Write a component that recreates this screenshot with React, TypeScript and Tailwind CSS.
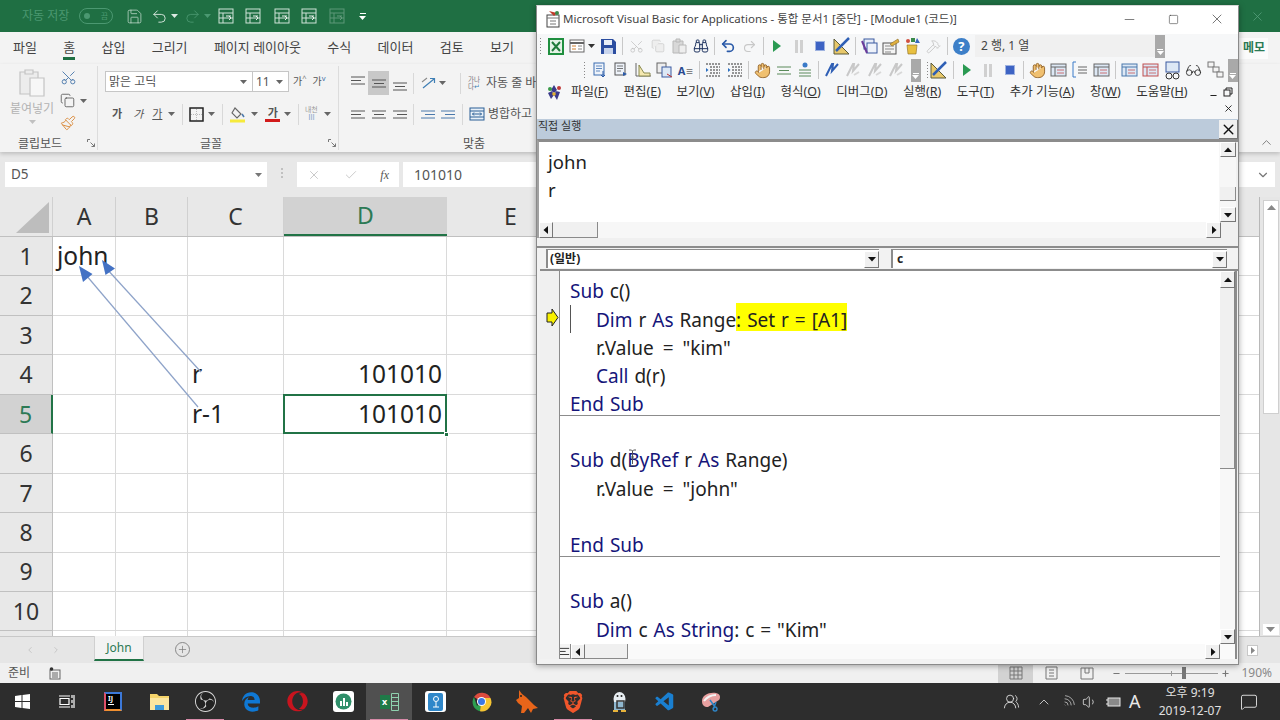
import React from "react";
import { Scissors, Copy, Paintbrush, Undo2, Redo2, Save, ChevronDown, ChevronUp, Binoculars, Hammer, Hand, Plus, Check, X, Minus, Square, MessageSquare, Wifi, Volume1, ChevronLeft, ChevronRight, UsersRound, Glasses } from "lucide-react";
import { FaEdgeLegacy, FaOpera } from "react-icons/fa6";
import { SiObsstudio, SiBrave } from "react-icons/si";
import { VscVscode } from "react-icons/vsc";

type P = { children?: React.ReactNode };

const Dd = ({ c = "#666" }: { c?: string }) => (
  <svg width="7" height="4" viewBox="0 0 7 4"><path d="M0 0h7L3.500 4z" fill={c} /></svg>
);

const Lines = ({ a, v = "mid", c = "#555" }: { a: "l" | "c" | "r"; v?: "top" | "mid" | "bot"; c?: string }) => {
  const y0 = v === "top" ? 2 : v === "mid" ? 5 : 8;
  const ws = a === "l" ? [[1, 15], [1, 11], [1, 15]] : a === "c" ? [[1, 15], [3, 13], [1, 15]] : [[1, 15], [5, 15], [1, 15]];
  return (
    <svg width="16" height="16" viewBox="0 0 16 16">
      {ws.map((w, i) => <path key={i} d={`M${w[0]} ${y0 + i * 3.5}H${w[1]}`} stroke={c} strokeWidth="1" />)}
    </svg>
  );
};

/* ---------- Excel title bar ---------- */
const QatDoc = ({ op = 1 }: { op?: number }) => (
  <svg width="18" height="18" viewBox="0 0 18 18" fill="none" stroke="#cfe3d8" strokeWidth="1" opacity={op}>
    <rect x="2" y="2" width="14" height="14" />
    <path d="M2 6h14M2 11h14M6 6v10" />
    <path d="M9 9h5M12 13l2-2-2-2" stroke="#e6f0ea" />
  </svg>
);

const TitleBar = () => (
  <div className="h-[32px] bg-[#1f6f43] flex items-center pl-[22px] shrink-0">
    <span className="text-[12px] text-[#4b9871] w-[48px] whitespace-nowrap">자동 저장</span>
    <div className="ml-[9px] w-[34px] h-[16px] rounded-full border border-[#4b9871] flex items-center justify-between px-[4px]">
      <div className="w-[6px] h-[6px] rounded-full bg-[#4b9871]" />
      <span className="text-[8px] text-[#4b9871] leading-none">끔</span>
    </div>
    <Save size={17} strokeWidth={1} className="ml-[13px] text-[#cfe3d8]" />
    <Undo2 size={17} strokeWidth={1.3} className="ml-[8px] text-[#dce9e2]" />
    <div className="ml-[3px]"><Dd c="#dce9e2" /></div>
    <Redo2 size={17} strokeWidth={1.2} className="ml-[6px] text-[#4b9871]" />
    <div className="ml-[3px]"><Dd c="#4b9871" /></div>
    <div className="ml-[6px]"><QatDoc /></div>
    <div className="ml-[9px]"><QatDoc /></div>
    <div className="ml-[11px]"><QatDoc /></div>
    <div className="ml-[9px]"><QatDoc /></div>
    <div className="ml-[10px]"><QatDoc op={0.35} /></div>
    <div className="ml-[13px] flex flex-col items-center gap-[2px]">
      <div className="w-[6px] h-[1px] bg-white" />
      <Dd c="#ffffff" />
    </div>
    <X size={15} strokeWidth={1.2} className="ml-auto mr-[15px] text-[#5aa27f]" />
  </div>
);

/* ---------- Tabs ---------- */
const tabs = ["파일", "홈", "삽입", "그리기", "페이지 레이아웃", "수식", "데이터", "검토", "보기"];
const TabRow = () => (
  <div className="h-[32px] bg-[#f3f3f3] flex items-center pl-[13px] gap-[26.300px] shrink-0 relative">
    {tabs.map((t) => (
      <div key={t} className="relative text-[13px] text-[#444] whitespace-nowrap">
        {t}
        {t === "홈" && <div className="absolute left-0 right-0 top-[19px] h-[3px] bg-[#1f6f43]" />}
      </div>
    ))}
    <div className="ml-auto mr-[12px] w-[31px] h-[21px] bg-[#fbfbfb] text-[12px] font-bold text-[#2c7a55] flex items-center justify-end pr-[3px] whitespace-nowrap">메모</div>
  </div>
);

/* ---------- Ribbon ---------- */
const Launcher = () => (
  <svg width="8" height="8" viewBox="0 0 8 8" className="absolute right-[2px] bottom-[3px]" fill="none" stroke="#777" strokeWidth="1">
    <path d="M.5 3V.5H3M7.500 7.500L3.500 3.500M7.500 4.500v3h-3" />
  </svg>
);
const Vs = () => <div className="w-[1px] h-[21px] bg-[#d8d8d8] shrink-0" />;

const Ribbon = () => (
  <div className="h-[88px] bg-[#f3f3f3] flex shrink-0 relative z-10 shadow-[0_2px_4px_rgba(0,0,0,0.18)]">
    {/* Clipboard */}
    <div className="w-[98px] relative flex flex-col border-r border-[#dcdcdc] my-[2px] shrink-0">
      <div className="flex flex-1 pt-[2px]">
        <div className="w-[60px] flex flex-col items-center pl-[4px]">
          <svg width="28" height="30" viewBox="0 0 28 30" fill="none" stroke="#c4c4c4" strokeWidth="1.200">
            <path d="M2 4h18v22H2z" fill="#ececec" />
            <path d="M7 2h8v4H7z" fill="#ececec" />
            <path d="M12 10h14v18H12z" fill="#f7f7f7" />
          </svg>
          <span className="text-[12px] text-[#b2b2b2] leading-[14px] mt-[4px] whitespace-nowrap">붙여넣기</span>
          <div className="mt-[4px]"><Dd c="#c0c0c0" /></div>
        </div>
        <div className="flex flex-col items-start pl-[0px] pt-[1px]">
          <Scissors size={17} strokeWidth={1.300} className="text-[#4a78ab] ml-[0px] rotate-[-90deg]" />
          <div className="flex items-center gap-[5px] mt-[7px]">
            <Copy size={15} strokeWidth={1.200} className="text-[#444]" />
            <Dd c="#666" />
          </div>
          <Paintbrush size={16} strokeWidth={1.400} className="text-[#d98b3c] mt-[7px]" />
        </div>
      </div>
      <div className="absolute bottom-[-2px] left-[18px] h-[16px] text-[12px] leading-[16px] text-[#555] whitespace-nowrap">클립보드</div>
      <Launcher />
    </div>
    {/* Font */}
    <div className="w-[241px] relative flex flex-col border-r border-[#dcdcdc] my-[2px] shrink-0 pl-[7px]">
      <div className="flex items-center pt-[5px]">
        <div className="w-[148px] h-[21px] bg-white border border-[#c6c6c6] flex items-center justify-between pl-[3px] pr-[5px] text-[12px] text-[#555]">
          맑은 고딕<Dd />
        </div>
        <div className="w-[36px] h-[21px] bg-white border border-l-0 border-[#c6c6c6] flex items-center justify-between pl-[3px] pr-[5px] text-[12px] text-[#555]">
          11<Dd />
        </div>
        <span className="ml-[4px] text-[10px] text-[#555]">가<sup className="text-[#777]">^</sup></span>
        <span className="ml-[6px] text-[10px] text-[#555]">가<sup className="text-[#4a78ab]">v</sup></span>
      </div>
      <div className="flex items-center mt-[10px] text-[11px] text-[#555] h-[24px]">
        <span className="ml-[7px] font-bold">가</span>
        <span className="ml-[11px] italic">가</span>
        <span className="ml-[9px] underline">가</span>
        <div className="ml-[6px]"><Dd /></div>
        <div className="ml-[7px]"><Vs /></div>
        <svg width="15" height="15" viewBox="0 0 15 15" className="ml-[6px]" fill="none">
          <rect x="1" y="1" width="13" height="13" stroke="#222" strokeWidth="1.500" />
          <path d="M7.500 2v11M2 7.500h11" stroke="#bbb" strokeDasharray="1 1" />
        </svg>
        <div className="ml-[4px]"><Dd /></div>
        <div className="ml-[7px]"><Vs /></div>
        <svg width="18" height="18" viewBox="0 0 18 18" className="ml-[6px]" fill="none">
          <path d="M6 3l6 6-4 4-5-5z" stroke="#666" strokeWidth="1.100" />
          <path d="M13 9l2 3" stroke="#4a78ab" strokeWidth="1.500" />
          <rect x="1" y="14.500" width="15" height="3" fill="#f6ea3b" />
        </svg>
        <div className="ml-[4px]"><Dd /></div>
        <div className="ml-[7px] w-[15px] flex flex-col items-center leading-none">
          <span className="text-[11px] font-bold text-[#555] leading-[13px]">가</span>
          <div className="w-[15px] h-[3px] bg-[#d21a1a]" />
        </div>
        <div className="ml-[4px]"><Dd /></div>
        <div className="ml-[7px]"><Vs /></div>
        <div className="ml-[4px] w-[16px] text-[7px] text-[#999] leading-[8px] text-center">내천<div className="text-[#7aa0c8]">Ⅲ</div></div>
        <div className="ml-[5px]"><Dd /></div>
      </div>
      <div className="absolute bottom-[-2px] left-[102px] h-[16px] text-[12px] leading-[16px] text-[#555]">글꼴</div>
      <Launcher />
    </div>
    {/* Alignment */}
    <div className="flex-1 relative flex flex-col pl-[8px] my-[2px]">
      <div className="flex items-center h-[24px] mt-[5px]">
        <div className="w-[21px] h-[24px] flex items-center justify-center"><Lines a="l" v="top" /></div>
        <div className="w-[21px] h-[24px] flex items-center justify-center bg-[#c8c8c8]"><Lines a="c" v="mid" /></div>
        <div className="w-[21px] h-[24px] flex items-center justify-center"><Lines a="c" v="bot" /></div>
        <div className="ml-[3px]"><Vs /></div>
        <svg width="17" height="16" viewBox="0 0 17 16" className="ml-[6px]" fill="none">
          <path d="M3 13L14 4M10 3.500h4.500V8" stroke="#3f7fb5" strokeWidth="1.200" />
          <path d="M2 7l5-4" stroke="#888" strokeWidth="1.100" />
        </svg>
        <div className="ml-[2px]"><Dd /></div>
        <div className="ml-[14px]"><Vs /></div>
        <div className="ml-[6px] w-[14px] text-[6.500px] leading-[7px] text-[#777] text-center">가나<br />다<span className="text-[#3f7fb5]">↵</span></div>
        <span className="ml-[5px] text-[12px] text-[#555] whitespace-nowrap">자동 줄 바꿈</span>
      </div>
      <div className="flex items-center h-[24px] mt-[7px]">
        <div className="w-[21px] flex justify-center"><Lines a="l" /></div>
        <div className="w-[21px] flex justify-center"><Lines a="c" /></div>
        <div className="w-[21px] flex justify-center"><Lines a="r" /></div>
        <div className="ml-[3px]"><Vs /></div>
        <div className="ml-[6px]"><Lines a="r" c="#4a78ab" /></div>
        <div className="ml-[4px]"><Lines a="r" c="#4a78ab" /></div>
        <div className="ml-[6px]"><Vs /></div>
        <svg width="16" height="16" viewBox="0 0 16 16" className="ml-[6px]" fill="none" stroke="#2a5f96">
          <rect x="1" y="2" width="14" height="12" fill="#e8f0f8" />
          <path d="M1 5h14M1 11h14M3.500 8h9M5 6.500L3.500 8 5 9.500M11 6.500L12.500 8 11 9.500" />
        </svg>
        <span className="ml-[3px] text-[12px] text-[#555] whitespace-nowrap">병합하고</span>
      </div>
      <div className="absolute bottom-[-2px] left-[124px] h-[16px] text-[12px] leading-[16px] text-[#555]">맞춤</div>
      <ChevronUp size={15} strokeWidth={1.500} className="absolute right-[6px] bottom-[0px] text-[#777]" />
    </div>
  </div>
);

/* ---------- Formula bar ---------- */
const FormulaBar = () => (
  <div className="h-[45px] bg-[#e8e8e8] flex items-start pt-[10px] pl-[5px] pr-[5px] shrink-0">
    <div className="w-[262px] h-[25px] bg-white flex items-center justify-between pl-[6px] pr-[5px] text-[13.500px] text-[#555] leading-none">
      D5<Dd c="#777" />
    </div>
    <div className="ml-[14px] mt-[6px] w-[2px] flex flex-col gap-[2px]">
      <div className="h-[2px] bg-[#c0c0c0]" /><div className="h-[2px] bg-[#c0c0c0]" /><div className="h-[2px] bg-[#c0c0c0]" />
    </div>
    <div className="ml-[14px] w-[102px] h-[25px] bg-white flex items-center justify-between px-[10px]">
      <X size={14} strokeWidth={1.500} className="text-[#c2c2c2]" />
      <Check size={14} strokeWidth={1.500} className="text-[#c2c2c2]" />
      <span className="text-[12px] italic font-['Liberation_Serif',serif] text-[#555]">fx</span>
    </div>
    <div className="ml-[4px] flex-1 h-[25px] bg-white flex items-center justify-between pl-[11px] pr-[4px] text-[14px] text-[#555] leading-none">
      101010<ChevronDown size={14} strokeWidth={2} className="text-[#777] mr-[1px]" />
    </div>
  </div>
);

/* ---------- Sheet ---------- */
const colW = ["w-[63px]", "w-[72px]", "w-[96px]", "w-[163px]", "w-[128px]", "w-[685px]"];
const colN = ["A", "B", "C", "D", "E", ""];
const data: Record<number, Record<number, string>> = {
  1: { 0: "john" },
  4: { 2: "r", 3: "101010" },
  5: { 2: "r-1", 3: "101010" },
};

const Sheet = () => (
  <div className="flex-1 flex min-h-0">
    <div className="w-[1260px] relative overflow-hidden bg-white border-r border-[#b8b8b8]">
      <div className="h-[40px] flex bg-[#e8e8e8] border-b border-[#c0c0c0]">
        <div className="w-[53px] shrink-0 flex items-end justify-end pr-[3px] pb-[3px] border-r border-[#d0d0d0]">
          <svg width="33" height="31" viewBox="0 0 33 31"><path d="M33 0v31H0z" fill="#bdbdbd" /></svg>
        </div>
        {colN.map((n, i) => (
          <div key={i} className={`${colW[i]} shrink-0 flex items-center justify-center text-[23px] ${i === 3 ? "bg-[#d2d2d2] text-[#2c7a55] border-b-2 border-[#217346]" : "text-[#333] border-r border-[#d0d0d0]"}`}>{n}</div>
        ))}
      </div>
      {Array.from({ length: 11 }, (_, r) => r + 1).map((r) => (
        <div key={r} className="h-[39.450px] flex">
          <div className={`w-[53px] shrink-0 flex items-center justify-center text-[23px] border-b border-[#c0c0c0] ${r === 5 ? "bg-[#d2d2d2] text-[#2c7a55] border-r-2 border-r-[#217346]" : "bg-[#e8e8e8] text-[#333] border-r border-r-[#c0c0c0]"}`}>{r <= 10 ? r : ""}</div>
          {colN.map((_, c) => {
            const v = data[r]?.[c];
            return (
              <div key={c} className={`${colW[c]} shrink-0 flex items-center border-b border-r border-[#dadada] text-[24.500px] text-[#222] whitespace-nowrap ${c === 3 ? "justify-end pr-[4px]" : "pl-[4px]"}`}>{v}</div>
            );
          })}
        </div>
      ))}
      {/* selection */}
      <div className="absolute left-[283px] top-[197px] w-[164px] h-[40px] border-2 border-[#217346]" />
      <div className="absolute left-[444px] top-[235px] w-[5px] h-[5px] bg-[#217346] border border-white" />
      {/* tracer arrows */}
      <svg className="absolute left-0 top-0" width="300" height="240" viewBox="0 0 300 240">
        <g transform="translate(0,-197)">
          <path d="M201 372L106 268" stroke="#8ea3c9" strokeWidth="1.200" fill="none" />
          <path d="M198 407L86 275" stroke="#8ea3c9" strokeWidth="1.200" fill="none" />
          <path d="M102 260L115 268.500 105.500 275z" fill="#4472c4" />
          <path d="M79 266L92.500 274 83 282z" fill="#4472c4" />
        </g>
      </svg>
    </div>
    <div className="w-[19px] bg-[#e6e6e6] pl-[3px] pt-[3px] flex flex-col pb-[1px]">
      <div className="h-[214px] bg-white border border-[#cfcfcf] pt-[4px] pl-[3px]"><svg width="9" height="5" viewBox="0 0 9 5"><path d="M4.500 0L9 5H0z" fill="#888" /></svg></div>
      <div className="flex-1" />
      <div className="h-[11px] bg-white pl-[3px] pt-[3px]"><svg width="9" height="5" viewBox="0 0 9 5"><path d="M0 0h9L4.500 5z" fill="#888" /></svg></div>
    </div>
  </div>
);

const SheetTabs = () => (
  <div className="h-[27px] bg-[#e6e6e6] flex shrink-0 border-t border-[#c8c8c8]">
    <div className="w-[94px] flex items-center pl-[25px] gap-[16px] shrink-0">
      <ChevronLeft size={10} className="text-[#c0c0c0]" />
      <ChevronRight size={10} className="text-[#c0c0c0]" />
    </div>
    <div className="w-[50px] h-[25px] mt-[-1px] bg-[#f3f3f3] border-b-2 border-[#217346] border-x border-x-[#d0d0d0] flex items-center justify-center text-[12px] text-[#2c7a55] shrink-0">John</div>
    <div className="ml-[31px] mt-[5px] w-[15px] h-[15px] rounded-full border border-[#888] flex items-center justify-center shrink-0">
      <Plus size={11} strokeWidth={1.500} className="text-[#777]" />
    </div>
    <div className="ml-auto mr-[22px] mt-[8px] w-[11px] h-[11px] bg-white border border-[#c8c8c8] flex items-center justify-center shrink-0">
      <svg width="4" height="7" viewBox="0 0 4 7"><path d="M0 0l4 3.500L0 7z" fill="#888" /></svg>
    </div>
  </div>
);

const StatusBar = () => (
  <div className="h-[20px] bg-[#f0f0f0] flex items-center shrink-0 text-[#555]">
    <span className="ml-[8px] text-[12px]">준비</span>
    <svg width="12" height="13" viewBox="0 0 12 13" className="ml-[19px]" fill="none">
      <rect x="1" y="3" width="10" height="9" stroke="#666" />
      <path d="M3 6h6M3 8h6M3 10h6" stroke="#666" />
      <circle cx="2.500" cy="2" r="1.800" fill="#333" />
    </svg>
    <div className="ml-auto w-[35px] h-[20px] bg-[#d2d2d2] flex items-center justify-center">
      <svg width="14" height="14" viewBox="0 0 14 14" fill="none" stroke="#777"><path d="M1 1h12v12H1zM1 5h12M1 9h12M5 1v12M9 1v12" /></svg>
    </div>
    <div className="w-[36px] flex justify-center">
      <svg width="13" height="14" viewBox="0 0 13 14" fill="none" stroke="#777"><path d="M1 1h11v12H1zM4 4h5M4 7h5M4 10h5" /></svg>
    </div>
    <div className="w-[36px] flex justify-center">
      <svg width="14" height="13" viewBox="0 0 14 13" fill="none" stroke="#777"><path d="M1 1h12v11H1zM5 1v5h4V1" /></svg>
    </div>
    <Minus size={9} strokeWidth={3} className="ml-[7px] text-[#777]" />
    <div className="relative ml-[4px] w-[93px] h-[1px] bg-[#999]">
      <div className="absolute left-[46px] top-[-2px] w-[1px] h-[5px] bg-[#999]" />
      <div className="absolute left-[57px] top-[-6px] w-[4px] h-[12px] bg-[#777]" />
    </div>
    <Plus size={9} strokeWidth={3} className="ml-[3px] text-[#777]" />
    <span className="ml-[11px] mr-[8px] text-[12px] text-[#888]">190%</span>
  </div>
);

/* ---------- Taskbar ---------- */
const Cell = ({ children, active, run }: P & { active?: boolean; run?: boolean }) => (
  <div className={`relative w-[46px] h-[37px] flex items-center justify-center shrink-0 ${active ? "bg-[#505050]" : ""}`}>
    {children}
    {run && <div className="absolute bottom-0 left-[4px] right-[4px] h-[1px] bg-[#d78aa8]" />}
  </div>
);

const Taskbar = () => (
  <div className="h-[37px] bg-[#2d2d2d] flex items-center shrink-0">
    <div className="w-[44px] flex justify-center">
      <svg width="15" height="15" viewBox="0 0 15 15" fill="#fff"><path d="M0 2l6.500-1v6H0zM7.500 1L15 0v7H7.500zM0 8h6.500v6L0 13zM7.500 8H15v7l-7.500-1z" /></svg>
    </div>
    <Cell>
      <svg width="16" height="15" viewBox="0 0 16 15" fill="none" stroke="#fff" strokeWidth="1.200">
        <path d="M0 2h11M0 13h11M1 4.500h9v6H1zM13 1v3M13 6v3M13 11v3M15 1v13" />
      </svg>
    </Cell>
    <Cell>
      <div className="w-[18px] h-[19px] bg-black border-2 border-[#3c78d8] border-l-[#e0506a] border-b-[#f09030] text-[7px] leading-[9px] text-white font-bold pl-[2px]">IJ<div className="w-[6px] h-[1px] bg-white mt-[1px]" /></div>
    </Cell>
    <Cell>
      <svg width="21" height="19" viewBox="0 0 21 19">
        <path d="M1 2h7l2 2h10v14H1z" fill="#f5d46a" />
        <path d="M1 6h19v12H1z" fill="#fbe6a0" />
        <path d="M6 13h9v5H6z" fill="#3e9bdc" />
      </svg>
    </Cell>
    <Cell run><div className="bg-[#222] rounded-full"><SiObsstudio size={21} className="text-[#d8d8d8]" /></div></Cell>
    <Cell><FaEdgeLegacy size={20} className="text-[#0f78d4]" /></Cell>
    <Cell><FaOpera size={21} className="text-[#c8141e]" /></Cell>
    <Cell>
      <div className="w-[21px] h-[21px] rounded-[3px] bg-white flex items-center justify-center">
        <svg width="17" height="17" viewBox="0 0 17 17"><circle cx="8.500" cy="8.500" r="8" fill="#2f8f6a" /><path d="M5 8h2v5H5zM8 5h2v8H8zM11 9h2v4h-2z" fill="#fff" /></svg>
      </div>
    </Cell>
    <Cell active run>
      <div className="flex items-center gap-[1px]">
        <div className="w-[10px] h-[14px] bg-[#1f7a48] text-[9px] font-bold text-white leading-[14px] text-center">x</div>
        <svg width="8" height="18" viewBox="0 0 8 18" fill="none" stroke="#8fd0ae"><path d="M.5.5h7v17h-7zM.5 4.500h7M.5 8.500h7M.5 12.500h7" /></svg>
      </div>
    </Cell>
    <Cell>
      <div className="w-[21px] h-[21px] rounded-[3px] bg-white flex items-center justify-center">
        <div className="w-[15px] h-[18px] rounded-[2px] bg-[#2f87c9] flex items-center justify-center">
          <svg width="9" height="13" viewBox="0 0 9 13" fill="none" stroke="#fff"><circle cx="5" cy="4" r="2.500" /><path d="M2 12h6M5 7v5" /></svg>
        </div>
      </div>
    </Cell>
    <Cell>
      <svg width="21" height="21" viewBox="0 0 21 21">
        <path d="M10.500 10.500L3 6A9.500 9.500 0 0 1 19.500 7H10.500z" fill="#dd4b3e" />
        <path d="M10.500 10.500L6 15 3 6a9.500 9.500 0 0 0 6 14.300z" fill="#2d9f4f" />
        <path d="M10.500 7h9a9.500 9.500 0 0 1-10.500 13.300z" fill="#f6c533" />
        <circle cx="10.500" cy="10.500" r="4.500" fill="#fff" />
        <circle cx="10.500" cy="10.500" r="3.500" fill="#3b78e7" />
      </svg>
    </Cell>
    <Cell>
      <svg width="22" height="24" viewBox="0 0 22 24">
        <path d="M3 0l3 4 4 3 8 8 4 3-5 1-2 4-3-5-4 5H5l1-7-4-3-2-3 3-2z" fill="#e8651a" />
        <circle cx="5" cy="6" r="1" fill="#222" />
      </svg>
    </Cell>
    <Cell run><SiBrave size={22} className="text-[#f1562b]" /></Cell>
    <Cell>
      <svg width="19" height="22" viewBox="0 0 19 22">
        <ellipse cx="9.500" cy="8" rx="6" ry="7" fill="#e8eef2" />
        <path d="M4 11h11v8H4z" fill="#8fb7cf" />
        <rect x="7" y="10" width="7" height="7" fill="none" stroke="#333" strokeWidth="1.500" />
        <path d="M3 20h5M11 20h5" stroke="#e8b33a" strokeWidth="2" />
        <circle cx="7.500" cy="5" r="1" fill="#222" /><circle cx="11.500" cy="5" r="1" fill="#222" />
      </svg>
    </Cell>
    <Cell><VscVscode size={22} className="text-[#1a7fd0]" /></Cell>
    <Cell>
      <svg width="24" height="22" viewBox="0 0 24 22">
        <path d="M3 10C3 4 10 1 17 2c4 1 5 4 3 7L9 16C5 16 3 14 3 10z" fill="#e8a0a0" />
        <path d="M5 10c3-4 7-6 12-6" stroke="#f4f4f4" strokeWidth="2" fill="none" />
        <path d="M11 9l5 7M16 16a2 2 0 1 0 .1 0zM14 19l3-8" stroke="#2f87c9" strokeWidth="1.500" fill="none" />
      </svg>
    </Cell>
    <div className="ml-auto flex items-center text-[#e8e8e8]">
      <UsersRound size={17} strokeWidth={1.200} />
      <ChevronUp size={16} strokeWidth={1.200} className="ml-[16px]" />
      <Wifi size={15} strokeWidth={1.300} className="ml-[9px] text-[#bbbbbb] rotate-45" />
      <Volume1 size={16} strokeWidth={1.200} className="ml-[6px]" />
      <svg width="15" height="10" viewBox="0 0 15 10" className="ml-[8px]" fill="none" stroke="#e8e8e8"><rect x="2" y="1" width="12" height="8" fill="#8a8a8a" /><path d="M0 3h2M0 7h2" /></svg>
      <span className="ml-[8px] text-[18px] w-[14px]">A</span>
      <div className="ml-[10px] w-[74px] flex flex-col items-center text-[12px] leading-[18px] text-[#e0e0e0]">
        <span>오후 9:19</span><span>2019-12-07</span>
      </div>
      <MessageSquare size={18} strokeWidth={1.200} className="ml-[13px] mr-[22px]" />
    </div>
  </div>
);

/* ---------- VBA window ---------- */
const T = ({ children }: P) => <div className="w-[21.500px] h-[22px] flex items-center justify-center shrink-0">{children}</div>;
const Sep = () => <div className="w-[1px] h-[18px] mx-[2.500px] bg-[#c8c8c8] shrink-0" />;
const Grip = () => (
  <div className="w-[2px] flex flex-col gap-[2px] shrink-0">
    {[0, 1, 2, 3, 4, 5].map((i) => <div key={i} className="w-[1px] h-[1px] bg-[#888]" />)}
  </div>
);
const GrayGrip = () => (
  <div className="w-[10px] h-[23px] bg-[#a9a9a9] flex flex-col items-center justify-end pb-[3px] gap-[1px] shrink-0">
    <div className="w-[6px] h-[1px] bg-white" />
    <Dd c="#fff" />
  </div>
);

const Doc = ({ c = "#3b6db0", extra }: { c?: string; extra?: React.ReactNode }) => (
  <svg width="16" height="16" viewBox="0 0 16 16" fill="none">
    <rect x="2" y="1" width="10" height="12" fill="#eef3fa" stroke={c} />
    <path d="M4 4h6M4 6.500h6M4 9h4" stroke={c} strokeWidth=".8" />
    {extra}
  </svg>
);
const Indent = ({ c = "#333" }: { c?: string }) => (
  <svg width="16" height="16" viewBox="0 0 16 16" fill="none" stroke={c}>
    <path d="M1 2h14M5 5h10M5 8h10M5 11h10M1 14h14" strokeDasharray="2 1" />
    <path d="M1 6l2.500 2L1 10z" fill="#2a6fc0" stroke="none" />
  </svg>
);
const Design = () => (
  <svg width="20" height="20" viewBox="0 0 20 20" fill="none">
    <path d="M2 3v15h15z" fill="#e8c86a" stroke="#5a5a3a" />
    <path d="M4 15L17 2" stroke="#2f5fb5" strokeWidth="2.500" />
  </svg>
);
const Run = () => <svg width="10" height="14" viewBox="0 0 10 14"><path d="M1 1l8 6-8 6z" fill="#2a9a52" /></svg>;
const Pause = () => <svg width="10" height="13" viewBox="0 0 10 13" fill="#d0d0d0"><rect x="1" y="0" width="3" height="13" /><rect x="6" y="0" width="3" height="13" /></svg>;
const Stop = () => <div className="w-[10px] h-[10px] bg-[#3d63c4] border border-[#9fb3e0]" />;
const HandI = () => <Hand size={17} strokeWidth={1.200} className="text-[#8a5a20] fill-[#f0c070]" />;
const Wand = ({ faded }: { faded?: boolean }) => (
  <svg width="18" height="18" viewBox="0 0 18 18" fill="none">
    <path d="M2 15L8 3h1l-1 7 6-7" stroke={faded ? "#c8c8c8" : "#2f5fb5"} strokeWidth="2" />
    {faded && <path d="M9 14l5-3" stroke="#d8d8d8" strokeWidth="2" />}
  </svg>
);
const Sq = ({ c = "#4a78ab" }: { c?: string }) => (
  <svg width="17" height="16" viewBox="0 0 17 16" fill="none"><rect x="1" y="2" width="15" height="12" fill="#dde8f5" stroke={c} /><path d="M1 5h15M5 5v9" stroke={c} /><path d="M7 8h7M7 11h7" stroke="#c85050" strokeWidth=".8" /></svg>
);

const menu: [string, string][] = [["파일", "F"], ["편집", "E"], ["보기", "V"], ["삽입", "I"], ["형식", "O"], ["디버그", "D"], ["실행", "R"], ["도구", "T"], ["추가 기능", "A"], ["창", "W"], ["도움말", "H"]];

const Arrow = ({ d }: { d: "u" | "d" | "l" | "r" }) => (
  <svg width="8" height="8" viewBox="0 0 8 8">
    <path fill="#111" d={d === "u" ? "M4 1.500L8 6H0z" : d === "d" ? "M0 2h8L4 6.500z" : d === "l" ? "M6 0v8L1.500 4z" : "M2 0v8l4.500-4z"} />
  </svg>
);
const SBtn = ({ d, cls = "w-[15px] h-[15px]" }: { d: "u" | "d" | "l" | "r"; cls?: string }) => (
  <div className={`${cls} bg-[#f0f0f0] border-t border-l border-t-white border-l-white border-r border-b border-r-[#777] border-b-[#777] flex items-center justify-center shrink-0`}>
    <Arrow d={d} />
  </div>
);
const Thumb = ({ cls }: { cls: string }) => (
  <div className={`${cls} bg-[#f0f0f0] border-r border-b border-r-[#8a8a8a] border-b-[#8a8a8a] shrink-0`} />
);

type Seg = [string, "k" | "n"];
const codeLines: { segs: Seg[]; ind?: boolean; sep?: boolean; cur?: boolean; wide?: boolean }[] = [
  { segs: [["Sub", "k"], [" c()", "n"]] },
  { segs: [["Dim", "k"], [" r ", "n"], ["As", "k"], [" Range", "n"]], ind: true, cur: true },
  { segs: [["r.Value = \"kim\"", "n"]], ind: true, wide: true },
  { segs: [["Call", "k"], [" d(r)", "n"]], ind: true },
  { segs: [["End Sub", "k"]], sep: true },
  { segs: [] },
  { segs: [["Sub", "k"], [" d(", "n"], ["ByRef", "k"], [" r ", "n"], ["As", "k"], [" Range)", "n"]] },
  { segs: [["r.Value = \"john\"", "n"]], ind: true, wide: true },
  { segs: [] },
  { segs: [["End Sub", "k"]], sep: true },
  { segs: [] },
  { segs: [["Sub", "k"], [" a()", "n"]] },
  { segs: [["Dim", "k"], [" c ", "n"], ["As String", "k"], [": c = \"Kim\"", "n"]], ind: true },
];

const Vba = () => (
  <div className="absolute z-20 left-[536px] top-[5px] w-[703px] h-[660px] bg-[#f2f2f2] border border-[#8a8a8a] border-t-[#d8d8d8] flex flex-col shadow-[0_1px_6px_rgba(0,0,0,0.35)]">
    {/* title */}
    <div className="h-[28px] bg-white flex items-center pb-[2px] shrink-0">
      <svg width="18" height="18" viewBox="0 0 18 18" className="ml-[7px]" fill="none">
        <rect x="3" y="5" width="12" height="12" fill="#fff" stroke="#444" />
        <path d="M3 8h12M6 11h6M6 14h6" stroke="#777" />
        <path d="M5 1l8 2-3 3z" fill="#c03a2a" /><circle cx="13" cy="3" r="2" fill="#3a8a4a" />
      </svg>
      <span className="ml-[1px] text-[11.500px] text-[#444] whitespace-nowrap">Microsoft Visual Basic for Applications - 통합 문서1 [중단] - [Module1 (코드)]</span>
      <Minus size={15} strokeWidth={1} className="ml-auto text-[#333]" />
      <Square size={11} strokeWidth={1.200} className="ml-[31px] text-[#333]" />
      <X size={16} strokeWidth={1} className="ml-[30px] mr-[13px] text-[#333]" />
    </div>
    {/* toolbar 1 */}
    <div className="h-[24px] flex items-center pl-[3px] bg-[#f6f7f8] shrink-0">
      <Grip />
      <div className="w-[3px]" />
      <T><svg width="16" height="17" viewBox="0 0 16 17" fill="none"><rect x="1" y="1" width="14" height="15" fill="#e4f2e6" stroke="#1f8f3f" strokeWidth="2" /><path d="M4 4l8 9M12 4l-8 9" stroke="#1f7a3a" strokeWidth="2" /></svg></T>
      <T><svg width="16" height="16" viewBox="0 0 16 16" fill="none"><rect x="1" y="2" width="14" height="12" fill="#fff" stroke="#666" /><path d="M1 5h14" stroke="#666" strokeWidth="2" /><path d="M3 8h4M3 11h4" stroke="#d08030" /><path d="M9 8h4M9 11h4" stroke="#888" /></svg></T>
      <div className="w-[10px] shrink-0"><Dd c="#333" /></div>
      <T><svg width="15" height="15" viewBox="0 0 15 15"><path d="M0 0h12l3 3v12H0z" fill="#2b4da0" /><rect x="3" y="1" width="8" height="5" fill="#e8eef8" /><rect x="3" y="9" width="9" height="6" fill="#c8d4ec" /></svg></T>
      <Sep />
      <T><Scissors size={15} strokeWidth={1.200} className="text-[#c0c0c0] rotate-[-90deg]" /></T>
      <T><Copy size={14} strokeWidth={1.200} className="text-[#c8c8c8] fill-[#eeeeee]" /></T>
      <T><svg width="15" height="16" viewBox="0 0 15 16" fill="#d8d8d8" stroke="#b8b8b8"><path d="M1 3h10v12H1z" /><path d="M4 1h4v3H4z" /><path d="M7 7h7v8H7z" fill="#eee" /></svg></T>
      <T><Binoculars size={16} strokeWidth={1.500} className="text-[#1f3460]" /></T>
      <Sep />
      <T><Undo2 size={16} strokeWidth={2.500} className="text-[#2a5aa8]" /></T>
      <T><Redo2 size={15} strokeWidth={1.800} className="text-[#c8c8c8]" /></T>
      <Sep />
      <T><Run /></T>
      <T><Pause /></T>
      <T><Stop /></T>
      <T><Design /></T>
      <Sep />
      <T><svg width="17" height="18" viewBox="0 0 17 18" fill="none"><rect x="3" y="2" width="10" height="10" fill="#e6ecf8" stroke="#3a5aa0" /><rect x="6" y="6" width="10" height="10" fill="#eef2fa" stroke="#3a5aa0" /><path d="M1 4l5 12" stroke="#6a3a9a" strokeWidth="2" /></svg></T>
      <T><svg width="18" height="17" viewBox="0 0 18 17" fill="none"><rect x="1" y="5" width="13" height="11" fill="#f4f4f4" stroke="#555" /><path d="M3 8h9M3 11h9M3 14h6" stroke="#888" /><path d="M8 6l8-5 1 3-7 4z" fill="#e0b040" stroke="#8a6a20" strokeWidth=".6" /></svg></T>
      <T><svg width="18" height="18" viewBox="0 0 18 18"><path d="M4 8h10l-1 9H5z" fill="#e8c040" stroke="#8a6a20" strokeWidth=".6" /><circle cx="5" cy="4" r="2" fill="#d05040" /><rect x="8" y="1" width="4" height="4" fill="#3a8a4a" /><path d="M14 1l3 5h-5z" fill="#3a6ac0" /></svg></T>
      <T><Hammer size={15} strokeWidth={1.500} className="text-[#c8c8c8]" /></T>
      <Sep />
      <T><div className="w-[17px] h-[17px] rounded-full bg-[#3d7fc8] text-white text-[13px] font-bold leading-[17px] text-center">?</div></T>
      <div className="ml-[3px] w-[180px] h-[22px] bg-[#f0f0f0] flex items-center pl-[6px] text-[12px] text-[#444] shrink-0">2 행, 1 열</div>
      <GrayGrip />
    </div>
    {/* toolbar 2 */}
    <div className="h-[24px] flex items-center pl-[47px] bg-[#f6f7f8] shrink-0">
      <Grip />
      <div className="w-[3px]" />
      <T><Doc extra={<path d="M11 9v6M9 13l2 2 2-2" stroke="#2a5aa8" />} /></T>
      <T><Doc c="#555" extra={<path d="M10 10l4 2-4 2z" fill="#2a5aa8" />} /></T>
      <T><svg width="18" height="17" viewBox="0 0 18 17" fill="none"><path d="M2 1v13h15" stroke="#666" /><path d="M5 3l5 8h6v3H5z" fill="#f4e8b0" stroke="#8a8a50" /></svg></T>
      <T><svg width="17" height="17" viewBox="0 0 17 17" fill="none"><rect x="1" y="1" width="9" height="10" fill="#eee" stroke="#666" /><rect x="6" y="5" width="9" height="10" fill="#dde8f5" stroke="#3a5aa0" /><path d="M11 12l5 3" stroke="#c03030" /></svg></T>
      <T><span className="text-[11px] font-bold text-[#2a4a90] leading-none">A<span className="text-[8px] text-[#666]">≡</span></span></T>
      <Sep />
      <T><Indent /></T>
      <T><Indent /></T>
      <Sep />
      <T><HandI /></T>
      <T><Lines a="c" c="#5a8a5a" /></T>
      <T><svg width="16" height="17" viewBox="0 0 16 17" fill="none"><circle cx="8" cy="3" r="2.500" fill="#3a7ac8" /><path d="M2 8h12M2 11h12M2 14h12" stroke="#5a8a5a" /></svg></T>
      <Sep />
      <T><Wand /></T>
      <T><Wand faded /></T>
      <T><Wand faded /></T>
      <T><Wand faded /></T>
      <div className="w-[3px]" />
      <GrayGrip />
      <div className="w-[6px]" />
      <Grip />
      <T><Design /></T>
      <Sep />
      <T><Run /></T>
      <T><Pause /></T>
      <T><Stop /></T>
      <Sep />
      <T><HandI /></T>
      <T><Sq c="#666" /></T>
      <T><svg width="16" height="18" viewBox="0 0 16 18" fill="none"><path d="M4 1H1v15h3" stroke="#3a7ac8" /><path d="M6 6h9M6 9h9M6 12h9" stroke="#666" /></svg></T>
      <T><Sq c="#666" /></T>
      <Sep />
      <T><Sq /></T>
      <T><Sq c="#c05050" /></T>
      <T><svg width="17" height="19" viewBox="0 0 17 19" fill="none"><rect x="2" y="1" width="13" height="10" fill="#dde8f5" stroke="#3a5aa0" /><circle cx="5" cy="15" r="3" stroke="#333" /><circle cx="12" cy="15" r="3" stroke="#333" /></svg></T>
      <T><Glasses size={17} strokeWidth={1.300} className="text-[#333]" /></T>
      <T><svg width="17" height="18" viewBox="0 0 17 18" fill="#f4f4f4" stroke="#777"><rect x="1" y="1" width="6" height="5" /><rect x="6" y="6" width="6" height="5" /><rect x="10" y="11" width="6" height="5" /></svg></T>
      <div className="w-[2px]" />
      <GrayGrip />
    </div>
    {/* menu */}
    <div className="h-[37px] bg-[#f6f7f8] relative shrink-0">
      <div className="h-[21px] flex items-center pl-[34px] gap-[15.500px] relative">
        <svg width="18" height="18" viewBox="0 0 18 18" className="absolute left-[8px] top-[2px]" fill="none">
          <path d="M9 1l3 5-3 3-3-3zM3 9l4-2 2 4-3 4zM15 8l-4-1-2 4 3 5z" fill="#3a3a8a" />
          <circle cx="5" cy="5" r="2" fill="#3a9a4a" /><circle cx="14" cy="4" r="2" fill="#c03a3a" /><circle cx="9" cy="10" r="1.800" fill="#e0b030" />
        </svg>
        {menu.map(([k, u]) => (
          <span key={k} className="text-[12.500px] text-[#333] whitespace-nowrap">{k}(<u>{u}</u>)</span>
        ))}
        <Minus size={9} strokeWidth={3} className="absolute right-[20px] top-[9px] text-[#222]" />
        <svg width="10" height="10" viewBox="0 0 10 10" fill="none" stroke="#222" className="absolute right-[5px] top-[5px]"><path d="M3 3V1h6v6H7" /><rect x="1" y="3" width="6" height="6" /></svg>
      </div>
      <X size={11} strokeWidth={2} className="absolute right-[4px] top-[21px] text-[#222]" />
    </div>
    {/* immediate caption */}
    <div className="h-[20px] bg-[#bccbdb] flex shrink-0 justify-between">
      <span className="text-[11px] text-[#333] leading-[13px] pl-[1px] whitespace-nowrap">직접 실행</span>
      <div className="w-[19px] h-[19px] mt-[1px] bg-[#f0f0f0] border-r border-b border-[#777] flex items-center justify-center">
        <X size={17} strokeWidth={2} className="text-[#111]" />
      </div>
    </div>
    {/* immediate pane */}
    <div className="h-[99px] flex flex-col border-t-[3px] border-t-[#8c8c8c] border-l-2 border-l-[#a0a0a0] shrink-0 bg-[#f0f0f0]">
      <div className="flex-1 flex min-h-0">
        <div className="flex-1 bg-white pl-[9px] text-[18.500px] leading-[28px] text-[#222] pt-[6px]">
          <div>john</div><div>r</div>
        </div>
        <div className="w-[17px] bg-[#f7f7f7] flex flex-col items-center mr-[2px] shrink-0">
          <SBtn d="u" cls="w-[16px] h-[15px]" />
          <div className="flex-1" />
          <Thumb cls="w-[16px] h-[14px]" />
          <div className="h-[6px]" />
          <SBtn d="d" cls="w-[16px] h-[15px]" />
        </div>
      </div>
      <div className="h-[16px] flex bg-[#f7f7f7] shrink-0 mr-[17px]">
        <SBtn d="l" cls="w-[14px] h-[16px]" />
        <Thumb cls="w-[45px] h-[16px]" />
        <div className="flex-1" />
        <SBtn d="r" cls="w-[15px] h-[16px]" />
      </div>
    </div>
    <div className="h-[8px] shrink-0 bg-[#f0f0f0]" />
    {/* code pane */}
    <div className="flex-1 flex flex-col min-h-0 border-t-2 border-t-[#8c8c8c]">
      <div className="h-[23px] flex items-start pt-[1px] pl-[6px] pr-[11px] gap-[12px] shrink-0 border-b-2 border-b-[#8c8c8c] ml-[3px]">
        <div className="w-[333px] h-[19px] bg-white border-l-2 border-t border-[#8c8c8c] flex items-center justify-between">
          <span className="text-[12px] text-[#222] font-bold pl-[2px] leading-none">(일반)</span>
          <SBtn d="d" cls="w-[15px] h-[17px]" />
        </div>
        <div className="flex-1 h-[19px] bg-white border-l-2 border-t border-[#8c8c8c] flex items-center justify-between">
          <span className="text-[12px] text-[#222] font-bold pl-[4px] leading-none">c</span>
          <SBtn d="d" cls="w-[15px] h-[17px]" />
        </div>
      </div>
      <div className="flex-1 flex min-h-0 ml-[3px] border-r-2 border-r-[#8c8c8c] mr-[1px]">
        <div className="w-[20px] bg-[#f0f0f0] border-r border-r-[#8c8c8c] shrink-0 relative">
          <svg width="13" height="19" viewBox="0 0 13 19" className="absolute left-[6px] top-[37px]">
            <path d="M1 5h5V1l6 8.500L6 18v-4H1z" fill="#f8f000" stroke="#222" strokeWidth="1" />
          </svg>
        </div>
        <div className="flex-1 flex flex-col min-w-0 bg-white">
          <div className="flex-1 flex min-h-0">
            <div className="flex-1 bg-white overflow-hidden pt-[4px] text-[19px] [word-spacing:1px] relative">
              {codeLines.map((l, i) => (
                <div key={i} className={`h-[28.200px] flex items-center pt-[5px] whitespace-pre relative ${l.sep ? "border-b border-b-[#8c8c8c]" : ""} ${l.ind ? "pl-[36px]" : "pl-[10px]"} ${l.wide ? "[word-spacing:4px]" : ""}`}>
                  {l.cur && <div className="absolute left-[10px] top-[2px] w-[1px] h-[28px] bg-[#555]" />}
                  {l.segs.map(([t, k], j) => (
                    <span key={j} className={k === "k" ? "text-[#15157a]" : "text-[#222]"}>{t}</span>
                  ))}
                  {l.cur && <span className="h-[28px] mt-[-6px] pt-[6px] flex items-center bg-[#ffff00] text-[#222]">: Set r = [A1]</span>}
                </div>
              ))}
              {/* I-beam pointer */}
              <svg width="9" height="18" viewBox="0 0 9 18" className="absolute left-[68px] top-[178px]" fill="none" stroke="#555"><path d="M1 1h2.500l1 1 1-1H8M4.500 2v13M1 17h2.500l1-1 1 1H8M3 8h3" /></svg>
            </div>
            <div className="w-[15px] bg-[#f8f8f8] flex flex-col shrink-0">
              <SBtn d="u" cls="w-[15px] h-[17px]" />
              <Thumb cls="w-[15px] h-[181px]" />
              <div className="flex-1" />
              <SBtn d="d" cls="w-[15px] h-[15px]" />
            </div>
          </div>
          <div className="h-[15px] flex bg-[#fafafa] shrink-0 ml-[-20px] pr-[15px]">
            <div className="w-[16px] bg-[#e4e4e4] border-r border-b border-[#8c8c8c] flex items-center justify-center shrink-0"><Lines a="l" c="#666" /></div>
            <div className="w-[15px] bg-[#f4f4f4] border-r border-b border-[#8c8c8c] flex items-center justify-center shrink-0"><Lines a="l" c="#222" /></div>
            <SBtn d="l" cls="w-[14px] h-[15px]" />
            <Thumb cls="w-[43px] h-[15px]" />
            <div className="flex-1" />
            <SBtn d="r" cls="w-[15px] h-[15px]" />
          </div>
        </div>
      </div>
      <div className="h-[5px] shrink-0" />
    </div>
  </div>
);

export default function App() {
  return (
    <div className="relative w-[1280px] h-[720px] overflow-hidden flex flex-col bg-[#e6e6e6] font-['Noto_Sans','Noto_Sans_CJK_KR',sans-serif]">
      <TitleBar />
      <TabRow />
      <Ribbon />
      <FormulaBar />
      <Sheet />
      <SheetTabs />
      <StatusBar />
      <Taskbar />
      <Vba />
    </div>
  );
}
